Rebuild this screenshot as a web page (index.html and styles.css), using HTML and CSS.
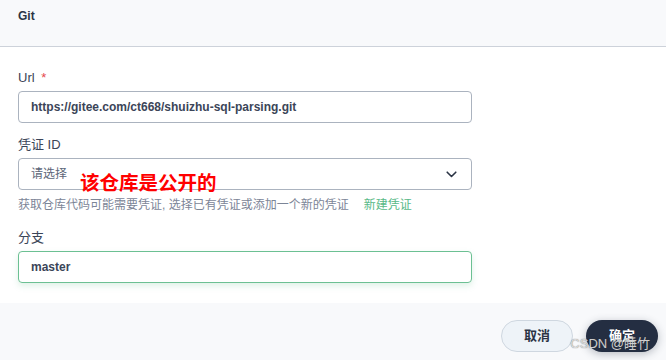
FILE: index.html
```html
<!DOCTYPE html>
<html lang="zh-CN">
<head>
  <meta charset="UTF-8">
  <title>Git</title>
  <link rel="stylesheet" href="styles.css">
</head>
<body>
  <div class="dialog">
    <div class="dialog-header">Git</div>

    <div class="dialog-body">
      <div class="form-item">
        <label class="form-label">Url <span class="required">*</span></label>
        <div class="input">https://gitee.com/ct668/shuizhu-sql-parsing.git</div>
      </div>

      <div class="form-item with-help">
        <label class="form-label">凭证 ID</label>
        <div class="input select">
          <span class="placeholder">请选择</span>
          <svg class="chevron" width="11" height="7" viewBox="0 0 11 7">
            <path d="M1.2 1.2 L5.5 5.5 L9.8 1.2" fill="none" stroke="#2b3445" stroke-width="1.6" stroke-linecap="round" stroke-linejoin="round"/>
          </svg>
        </div>
        <div class="help">获取仓库代码可能需要凭证, 选择已有凭证或添加一个新的凭证<a class="link">新建凭证</a></div>
        <div class="note">该仓库是公开的</div>
      </div>

      <div class="form-item">
        <label class="form-label">分支</label>
        <div class="input focused">master</div>
      </div>
    </div>

    <div class="dialog-footer">
      <button class="btn btn-cancel">取消</button>
      <button class="btn btn-ok">确定</button>
      <span class="watermark">CSDN @睡竹</span>
    </div>
  </div>
</body>
</html>
```

FILE: styles.css
```css
body {
  margin: 0;
  background: #ffffff;
  font-family: "Liberation Sans", "Noto Sans CJK SC", sans-serif;
  color: #3b4558;
}
.dialog {
  width: 666px;
  height: 360px;
  overflow: hidden;
}
.dialog-header {
  height: 47px;
  box-sizing: border-box;
  padding: 8px 18px 0;
  background: #f8f9fb;
  border-bottom: 1px solid #cdd2da;
  font-size: 12px;
  font-weight: bold;
  line-height: 16px;
  color: #2b3445;
}
.dialog-body {
  padding: 21px 18px 20px;
}
.form-item {
  position: relative;
  margin-bottom: 12px;
}
.form-item.with-help {
  margin-bottom: 15px;
}
.form-item:last-child {
  margin-bottom: 0;
}
.form-label {
  display: block;
  font-size: 13px;
  line-height: 20px;
  margin-bottom: 3px;
  color: #3b4558;
}
.required {
  color: #e5484d;
  margin-left: 3px;
}
.input {
  width: 454px;
  height: 32px;
  box-sizing: border-box;
  border: 1px solid #abb3bf;
  border-radius: 4px;
  padding: 0 12px;
  font-size: 12px;
  font-weight: bold;
  line-height: 30px;
  color: #3b4558;
}
.select {
  display: flex;
  align-items: center;
  justify-content: space-between;
  font-weight: normal;
}
.placeholder {
  color: #5b6577;
}
.chevron {
  margin-right: 2px;
}
.focused {
  border-color: #6cc093;
  box-shadow: 0 3px 6px rgba(108, 192, 147, 0.22);
}
.help {
  margin-top: 7px;
  font-size: 12px;
  line-height: 16px;
  color: #7c8597;
}
.link {
  margin-left: 15px;
  color: #58b987;
}
.note {
  position: absolute;
  left: 62px;
  top: 35px;
  font-family: "Noto Sans CJK SC", sans-serif;
  font-size: 19.5px;
  font-weight: bold;
  line-height: 24px;
  color: #ff0000;
}
.dialog-footer {
  position: relative;
  height: 58px;
  box-sizing: border-box;
  background: #f8f9fb;
  display: flex;
  justify-content: flex-end;
  align-items: flex-start;
  gap: 13px;
  padding: 17px 8px 0 0;
}
.btn {
  width: 72px;
  height: 32px;
  padding: 0 0 3px;
  border-radius: 16px;
  font-family: "Noto Sans CJK SC", sans-serif;
  font-size: 13px;
  font-weight: bold;
  cursor: pointer;
}
.btn-cancel {
  background: #eef3f8;
  border: 1px solid #cfd7e0;
  color: #2b3445;
}
.btn-ok {
  background: #242e42;
  border: none;
  color: #ffffff;
  box-shadow: 0 2px 8px rgba(36, 46, 66, 0.3);
}
.watermark {
  position: absolute;
  right: 16px;
  bottom: 9px;
  font-size: 13px;
  line-height: 16px;
  color: rgba(235, 235, 235, 0.85);
  text-shadow: 0 0 1px rgba(60, 60, 60, 0.8);
}
```
